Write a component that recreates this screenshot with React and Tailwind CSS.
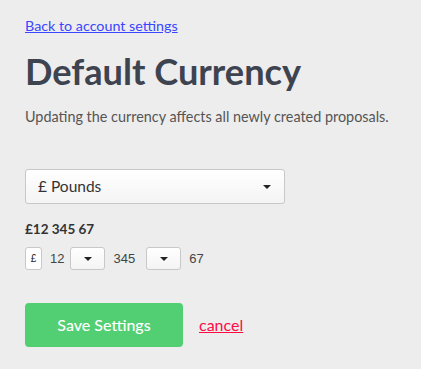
import React from "react";

function Caret() {
  return (
    <svg width="8" height="4" viewBox="0 0 8 4" className="block">
      <path d="M0 0 L8 0 L4 4 Z" fill="#222" />
    </svg>
  );
}

export default function App() {
  return (
    <div
      className="min-h-[369px] w-full bg-[#ededed] pl-[25px] pt-[13px]"
      style={{ fontFamily: "Lato, 'Open Sans', sans-serif" }}
    >
      <a href="#" className="text-[14.3px] leading-[18px] text-[#3a46ff] underline">
        Back to account settings
      </a>
      <h1 className="mt-[12px] text-[36.2px] font-bold leading-[44px] text-[#3e4350]">
        Default Currency
      </h1>
      <p className="mt-[15px] text-[14.4px] leading-[18px] text-[#555]">
        Updating the currency affects all newly created proposals.
      </p>
      <div className="mt-[43px] flex h-[35px] w-[260px] items-center justify-between rounded-[3px] border border-[#c8c8c8] bg-gradient-to-b from-white to-[#f4f4f4] pl-[12px] pr-[13px]">
        <span className="text-[15.5px] text-[#333]">£ Pounds</span>
        <Caret />
      </div>
      <div className="mt-[17px] text-[13.5px] font-bold leading-[16px] text-[#333]">£12 345 67</div>
      <div
        className="mt-[10px] flex h-[23px] items-center text-[13px] text-[#444]"
        style={{ fontFamily: "'Liberation Sans', Arial, sans-serif" }}
      >
        <div className="flex h-[23px] w-[17px] items-center justify-center rounded-[3px] border border-[#c8c8c8] bg-white text-[10px] text-[#222]">
          £
        </div>
        <span className="ml-[8px]">12</span>
        <div className="ml-[6px] flex h-[23px] w-[35px] items-center justify-center rounded-[3px] border border-[#c8c8c8] bg-gradient-to-b from-white to-[#f4f4f4]">
          <Caret />
        </div>
        <span className="ml-[8px]">345</span>
        <div className="ml-[11px] flex h-[23px] w-[35px] items-center justify-center rounded-[3px] border border-[#c8c8c8] bg-gradient-to-b from-white to-[#f4f4f4]">
          <Caret />
        </div>
        <span className="ml-[8px]">67</span>
      </div>
      <div className="mt-[33px] flex items-center">
        <button className="h-[44px] w-[158px] rounded-[4px] bg-[#52cf72] text-[16px] font-medium text-white">
          Save Settings
        </button>
        <a href="#" className="ml-[16px] text-[16px] text-[#ff0a44] underline">
          cancel
        </a>
      </div>
    </div>
  );
}
